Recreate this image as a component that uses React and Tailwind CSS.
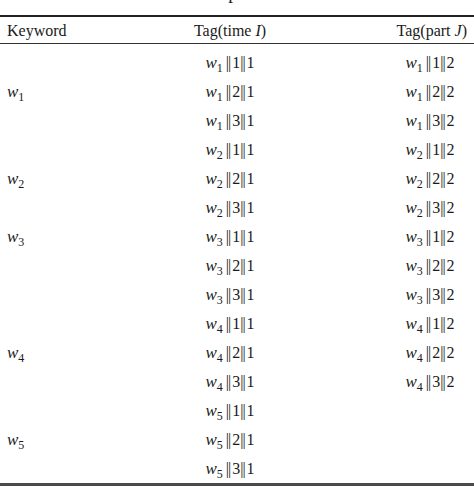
const rows = [
  { key: null, a: [1, 1, 1], b: [1, 1, 2] },
  { key: 1, a: [1, 2, 1], b: [1, 2, 2] },
  { key: null, a: [1, 3, 1], b: [1, 3, 2] },
  { key: null, a: [2, 1, 1], b: [2, 1, 2] },
  { key: 2, a: [2, 2, 1], b: [2, 2, 2] },
  { key: null, a: [2, 3, 1], b: [2, 3, 2] },
  { key: 3, a: [3, 1, 1], b: [3, 1, 2] },
  { key: null, a: [3, 2, 1], b: [3, 2, 2] },
  { key: null, a: [3, 3, 1], b: [3, 3, 2] },
  { key: null, a: [4, 1, 1], b: [4, 1, 2] },
  { key: 4, a: [4, 2, 1], b: [4, 2, 2] },
  { key: null, a: [4, 3, 1], b: [4, 3, 2] },
  { key: null, a: [5, 1, 1], b: null },
  { key: 5, a: [5, 2, 1], b: null },
  { key: null, a: [5, 3, 1], b: null },
];

function W({ n }) {
  return (
    <span>
      <span className="italic text-[17px]">w</span>
      <span className="relative top-[4px] text-[12px] not-italic">{n}</span>
    </span>
  );
}

function Tag({ t }) {
  if (!t) return null;
  return (
    <span className="whitespace-nowrap">
      <W n={t[0]} />
      <span className="ml-[3px] tracking-[-1px]">||</span>
      <span className="ml-[2px]">{t[1]}</span>
      <span className="tracking-[-1px]">||</span>
      <span className="ml-[2px]">{t[2]}</span>
    </span>
  );
}

export default function App() {
  return (
    <div className="w-[474px] h-[486px] bg-white text-[#1a1a1a] text-[16px] font-['Liberation_Serif',serif] overflow-hidden">
      <div className="h-[15px] overflow-hidden flex justify-center">
        <span className="ml-[-8px] mt-[-17px] leading-[20px] text-[19px]">p</span>
      </div>
      <div className="border-t-2 border-[#222]" />
      <div className="flex items-center h-[26px] leading-[26px] pt-[2px]">
        <div className="w-[150px] pl-[7px]">Keyword</div>
        <div className="w-[160px] text-center whitespace-nowrap">
          Tag(time <span className="italic">I</span>)
        </div>
        <div className="flex-1 text-right pr-[7px] whitespace-nowrap">
          Tag(part <span className="italic">J</span>)
        </div>
      </div>
      <div className="border-t border-[#333]" />
      <div className="pt-[4px]">
        {rows.map((r, i) => (
          <div key={i} className="flex items-center h-[29px]">
            <div className="w-[150px] pl-[7px]">{r.key ? <W n={r.key} /> : null}</div>
            <div className="w-[160px] text-center">
              <Tag t={r.a} />
            </div>
            <div className="w-[80px] ml-[80px] text-center">
              <Tag t={r.b} />
            </div>
          </div>
        ))}
      </div>
      <div className="border-t-[3px] border-[#4a4a4a]" />
    </div>
  );
}
